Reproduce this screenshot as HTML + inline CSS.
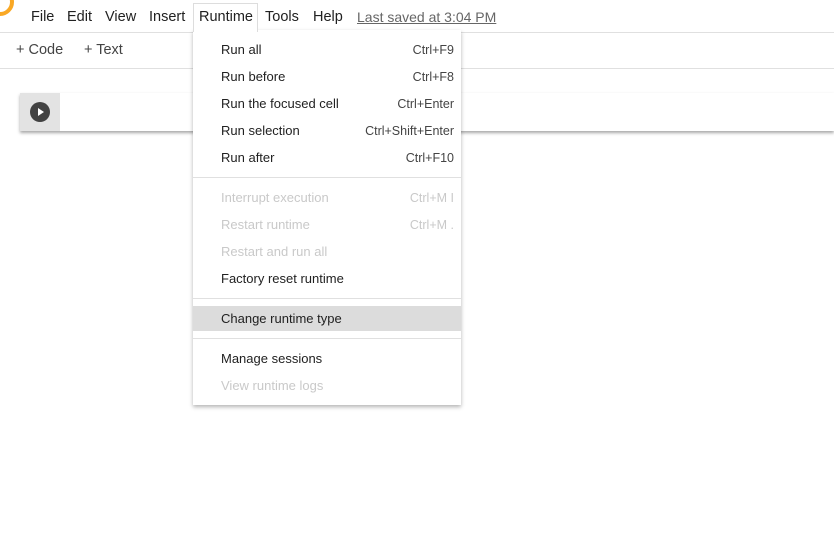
<!DOCTYPE html>
<html><head><style>
body{margin:0;width:834px;height:559px;background:#fff;font-family:"Liberation Sans",sans-serif;font-size:14px;color:#212121;position:relative;overflow:hidden}
.a{position:absolute;white-space:nowrap}
.mi{position:absolute;top:9px;font-size:14.5px}
.item{position:absolute;left:28px;font-size:13px}
.sc{position:absolute;right:7px;font-size:12.5px;color:#444}
.dis{color:#c9c9c9}
.sep{position:absolute;left:0;right:0;height:1px;background:#e0e0e0}
</style></head><body>
<div class="a" style="left:-14px;top:-12px;width:20px;height:20px;border:4px solid #f9a825;border-radius:50%"></div>
<span class="mi" style="left:31px">File</span>
<span class="mi" style="left:67px">Edit</span>
<span class="mi" style="left:105px">View</span>
<span class="mi" style="left:149px">Insert</span>
<span class="mi" style="left:265px">Tools</span>
<span class="mi" style="left:313px">Help</span>
<span class="mi" style="left:357px;color:#666;text-decoration:underline;font-size:14px">Last saved at 3:04 PM</span>
<div class="a" style="left:0;right:0;top:32px;height:1px;background:#e0e0e0"></div>
<span class="a" style="left:16px;top:42px;font-size:14.5px;color:#444">+ Code</span>
<span class="a" style="left:84px;top:42px;font-size:14.5px;color:#444">+ Text</span>
<div class="a" style="left:0;right:0;top:68px;height:1px;background:#e0e0e0"></div>
<div class="a" style="left:20px;top:93px;width:814px;height:38px;background:#fff;box-shadow:0 2px 3px rgba(0,0,0,.35)"></div>
<div class="a" style="left:20px;top:93px;width:40px;height:38px;background:#e3e3e3"></div>
<div class="a" style="left:30px;top:102px;width:20px;height:20px;border-radius:50%;background:#424242"></div>
<div class="a" style="left:38px;top:108px;width:0;height:0;border-left:6px solid #fff;border-top:4px solid transparent;border-bottom:4px solid transparent"></div>
<div class="a" style="left:193px;top:3px;width:63px;height:28px;border:1px solid #ddd;border-bottom:none;background:#fff;z-index:2"></div>
<span class="mi" style="left:199px;z-index:3">Runtime</span>
<div class="a" style="left:193px;top:30px;width:268px;height:375px;background:#fff;box-shadow:0 2px 4px rgba(0,0,0,.3);z-index:1">
<span class="item" style="top:12px">Run all</span><span class="sc" style="top:13px">Ctrl+F9</span>
<span class="item" style="top:39px">Run before</span><span class="sc" style="top:40px">Ctrl+F8</span>
<span class="item" style="top:66px">Run the focused cell</span><span class="sc" style="top:67px">Ctrl+Enter</span>
<span class="item" style="top:93px">Run selection</span><span class="sc" style="top:94px">Ctrl+Shift+Enter</span>
<span class="item" style="top:120px">Run after</span><span class="sc" style="top:121px">Ctrl+F10</span>
<div class="sep" style="top:147px"></div>
<span class="item dis" style="top:160px">Interrupt execution</span><span class="sc dis" style="top:161px">Ctrl+M I</span>
<span class="item dis" style="top:187px">Restart runtime</span><span class="sc dis" style="top:188px">Ctrl+M .</span>
<span class="item dis" style="top:214px">Restart and run all</span>
<span class="item" style="top:241px">Factory reset runtime</span>
<div class="sep" style="top:268px"></div>
<div class="a" style="left:0;right:0;top:276px;height:25px;background:#dcdcdc"></div>
<span class="item" style="top:281px">Change runtime type</span>
<div class="sep" style="top:308px"></div>
<span class="item" style="top:321px">Manage sessions</span>
<span class="item dis" style="top:348px">View runtime logs</span>
</div>
</body></html>
